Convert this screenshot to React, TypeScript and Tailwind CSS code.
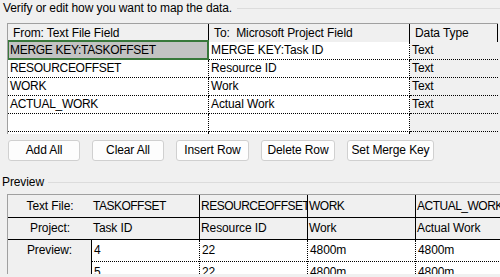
import * as React from "react";

const mapRows = [
  { from: "MERGE KEY:TASKOFFSET", to: "MERGE KEY:Task ID", type: "Text" },
  { from: "RESOURCEOFFSET", to: "Resource ID", type: "Text" },
  { from: "WORK", to: "Work", type: "Text" },
  { from: "ACTUAL_WORK", to: "Actual Work", type: "Text" },
  { from: "", to: "", type: "" },
  { from: "", to: "", type: "" },
];

const buttons = [
  { label: "Add All", w: "w-[72px]" },
  { label: "Clear All", w: "w-[72px]" },
  { label: "Insert Row", w: "w-[73px]" },
  { label: "Delete Row", w: "w-[74px]" },
  { label: "Set Merge Key", w: "w-[87px]" },
];

const previewCols = [
  { text: "TASKOFFSET", project: "Task ID", values: ["4", "5"] },
  { text: "RESOURCEOFFSET", project: "Resource ID", values: ["22", "22"] },
  { text: "WORK", project: "Work", values: ["4800m", "4800m"] },
  { text: "ACTUAL_WORK", project: "Actual Work", values: ["4800m", "4800m"] },
];

function SectionTitle({ children }: { children: React.ReactNode }) {
  return (
    <div className="flex h-[16px] items-center pl-[3px]">
      <span className="whitespace-nowrap">{children}</span>
      <div className="ml-[5px] h-px flex-1 bg-[#dcdcdc]" />
    </div>
  );
}

export default function App() {
  return (
    <div className="h-[277px] w-[500px] overflow-hidden bg-[#f0f0f0] font-['Liberation_Sans',Arial,sans-serif] text-[12px] tracking-[-0.1px] text-black">
      <SectionTitle>Verify or edit how you want to map the data.</SectionTitle>

      {/* mapping grid */}
      <div className="ml-[7px] mt-[7px] h-[111px] w-[491px] overflow-hidden border-l border-t border-[#a0a0a0] bg-white">
        <div className="grid h-[18px] grid-cols-[201px_201px_88px] bg-[#f0f0f0] leading-[18px]">
          <div className="border-r border-black pl-[5px]">From: Text File Field</div>
          <div className="whitespace-pre border-r border-black pl-[5px]">To:  Microsoft Project Field</div>
          <div className="border-r border-black pl-[5px]">Data Type</div>
        </div>
        {mapRows.map((r, i) => (
          <div key={i} className="grid h-[18px] grid-cols-[201px_201px_88px] leading-[17px]">
            <div className="relative border-b border-r border-dotted border-black bg-white pl-[2px] tracking-[-0.3px]">
              {i === 0 && (
                <>
                  <div className="absolute inset-0 bg-[#c3c3c3]" />
                  <div className="absolute -left-px -top-[2px] -right-[1px] -bottom-[1px] border-2 border-[#38783a]" />
                </>
              )}
              <span className="relative">{r.from}</span>
            </div>
            <div className="border-b border-r border-dotted border-black pl-[2px]">{r.to}</div>
            <div className="border-b border-dotted border-black bg-[#f0f0f0] pl-[2px]">{r.type}</div>
          </div>
        ))}
      </div>

      {/* buttons */}
      <div className="ml-[8px] mt-[6px] flex gap-3">
        {buttons.map((b) => (
          <button
            key={b.label}
            type="button"
            className={`${b.w} h-[21px] rounded-[3px] border border-[#d0d0d0] bg-[#fdfdfd] text-center leading-[19px]`}
          >
            {b.label}
          </button>
        ))}
      </div>

      <div className="mt-[13px]">
        <div className="flex h-[16px] items-center pl-[2px]">
          <span>Preview</span>
          <div className="ml-[4px] h-px flex-1 bg-[#dcdcdc]" />
        </div>
      </div>

      {/* preview grid */}
      <div className="ml-[7px] mt-[4px] h-[80px] w-[600px] overflow-hidden border-l border-t border-[#a0a0a0] bg-white">
        <div className="flex h-[23px] border-b border-black bg-[#f0f0f0] leading-[22px]">
          <div className="w-[84px] shrink-0 text-center">Text File:</div>
          {previewCols.map((c) => (
            <div key={c.text} className="w-[108px] shrink-0 overflow-hidden whitespace-nowrap border-r border-black pl-px tracking-[-0.5px]">
              {c.text}
            </div>
          ))}
        </div>
        <div className="flex h-[22px] border-b border-black bg-[#f0f0f0] leading-[21px]">
          <div className="w-[84px] shrink-0 text-center">Project:</div>
          {previewCols.map((c) => (
            <div key={c.text} className="w-[108px] shrink-0 overflow-hidden whitespace-nowrap border-r border-black pl-px">
              {c.project}
            </div>
          ))}
        </div>
        <div className="flex">
          <div className="w-[84px] shrink-0 border-r border-black bg-[#f0f0f0] text-center leading-[21px]">Preview:</div>
          {previewCols.map((c) => (
            <div key={c.text} className="w-[108px] shrink-0 border-r border-dotted border-black">
              {c.values.map((v, i) => (
                <div key={i} className="h-[22px] border-b border-dotted border-black pl-[2px] leading-[21px]">
                  {v}
                </div>
              ))}
            </div>
          ))}
        </div>
      </div>
    </div>
  );
}
